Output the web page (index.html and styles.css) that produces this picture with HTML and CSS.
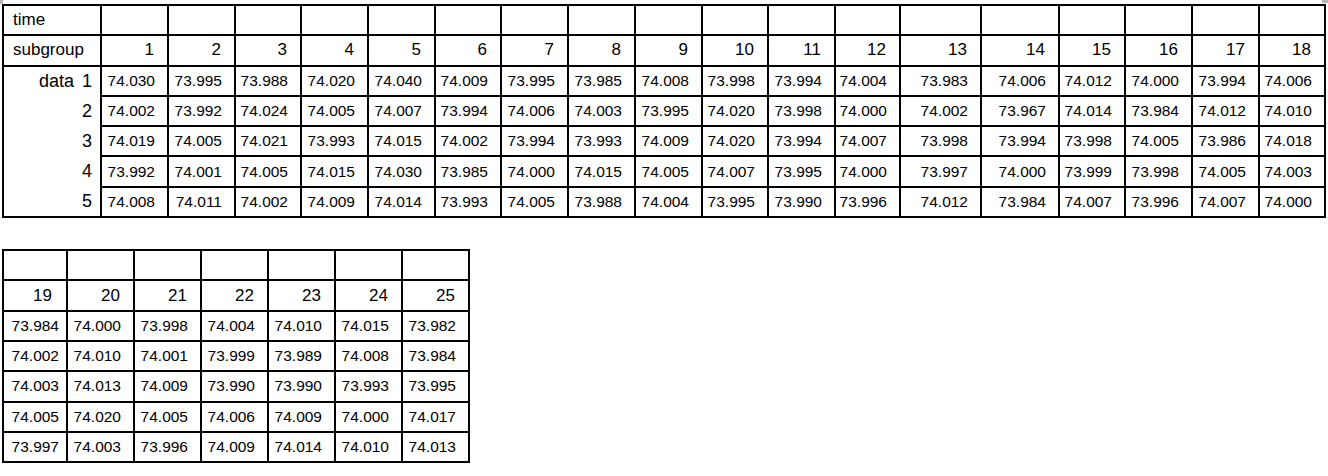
FILE: index.html
```html
<!DOCTYPE html>
<html>
<head>
<meta charset="utf-8">
<link rel="stylesheet" href="styles.css">
</head>
<body>
<span class="corner corner-l"></span>
<span class="corner corner-r"></span>
<div class="page">
<table class="grid t1">
<colgroup>
<col class="w98">
<col class="w67"><col class="w67"><col class="w66"><col class="w67"><col class="w67"><col class="w66">
<col class="w67"><col class="w67"><col class="w67"><col class="w66"><col class="w67"><col class="w65">
<col class="w81"><col class="w78"><col class="w66"><col class="w67"><col class="w67"><col class="w66">
</colgroup>
<tr class="hd"><td class="lbl left">time</td><td></td><td></td><td></td><td></td><td></td><td></td><td></td><td></td><td></td><td></td><td></td><td></td><td></td><td></td><td></td><td></td><td></td><td></td></tr>
<tr class="hd"><td class="lbl left">subgroup</td><td>1</td><td>2</td><td>3</td><td>4</td><td>5</td><td>6</td><td>7</td><td>8</td><td>9</td><td>10</td><td>11</td><td>12</td><td>13</td><td>14</td><td>15</td><td>16</td><td>17</td><td>18</td></tr>
<tr><td class="lbl first spaced">data 1</td><td>74.030</td><td>73.995</td><td>73.988</td><td>74.020</td><td>74.040</td><td>74.009</td><td>73.995</td><td>73.985</td><td>74.008</td><td>73.998</td><td>73.994</td><td>74.004</td><td>73.983</td><td>74.006</td><td>74.012</td><td>74.000</td><td>73.994</td><td>74.006</td></tr>
<tr><td class="lbl mid">2</td><td>74.002</td><td>73.992</td><td>74.024</td><td>74.005</td><td>74.007</td><td>73.994</td><td>74.006</td><td>74.003</td><td>73.995</td><td>74.020</td><td>73.998</td><td>74.000</td><td>74.002</td><td>73.967</td><td>74.014</td><td>73.984</td><td>74.012</td><td>74.010</td></tr>
<tr><td class="lbl mid">3</td><td>74.019</td><td>74.005</td><td>74.021</td><td>73.993</td><td>74.015</td><td>74.002</td><td>73.994</td><td>73.993</td><td>74.009</td><td>74.020</td><td>73.994</td><td>74.007</td><td>73.998</td><td>73.994</td><td>73.998</td><td>74.005</td><td>73.986</td><td>74.018</td></tr>
<tr><td class="lbl mid">4</td><td>73.992</td><td>74.001</td><td>74.005</td><td>74.015</td><td>74.030</td><td>73.985</td><td>74.000</td><td>74.015</td><td>74.005</td><td>74.007</td><td>73.995</td><td>74.000</td><td>73.997</td><td>74.000</td><td>73.999</td><td>73.998</td><td>74.005</td><td>74.003</td></tr>
<tr><td class="lbl last">5</td><td>74.008</td><td>74.011</td><td>74.002</td><td>74.009</td><td>74.014</td><td>73.993</td><td>74.005</td><td>73.988</td><td>74.004</td><td>73.995</td><td>73.990</td><td>73.996</td><td>74.012</td><td>73.984</td><td>74.007</td><td>73.996</td><td>74.007</td><td>74.000</td></tr>
</table>

<table class="grid t2">
<colgroup>
<col class="w64"><col class="w67"><col class="w67"><col class="w67"><col class="w67"><col class="w67"><col class="w67">
</colgroup>
<tr class="hd"><td></td><td></td><td></td><td></td><td></td><td></td><td></td></tr>
<tr class="hd"><td>19</td><td>20</td><td>21</td><td>22</td><td>23</td><td>24</td><td>25</td></tr>
<tr><td>73.984</td><td>74.000</td><td>73.998</td><td>74.004</td><td>74.010</td><td>74.015</td><td>73.982</td></tr>
<tr><td>74.002</td><td>74.010</td><td>74.001</td><td>73.999</td><td>73.989</td><td>74.008</td><td>73.984</td></tr>
<tr><td>74.003</td><td>74.013</td><td>74.009</td><td>73.990</td><td>73.990</td><td>73.993</td><td>73.995</td></tr>
<tr><td>74.005</td><td>74.020</td><td>74.005</td><td>74.006</td><td>74.009</td><td>74.000</td><td>74.017</td></tr>
<tr><td>73.997</td><td>74.003</td><td>73.996</td><td>74.009</td><td>74.014</td><td>74.010</td><td>74.013</td></tr>
</table>
</div>
</body>
</html>
```
FILE: styles.css
```css
html, body {
  margin: 0;
  padding: 0;
  background: #ffffff;
}
body {
  font-family: "Liberation Sans", Arial, Helvetica, sans-serif;
  color: #000000;
  position: relative;
  width: 1328px;
  height: 476px;
  overflow: hidden;
}
.corner {
  position: absolute;
  top: 0;
  background: #b4b4b4;
}
.corner-l {
  left: 0;
  width: 3px;
  height: 4px;
}
.corner-r {
  right: 0;
  width: 6px;
  height: 3px;
}
.page {
  padding: 4px 0 0 2px;
  display: flex;
  flex-direction: column;
  align-items: flex-start;
  gap: 31px;
}
.grid {
  border-collapse: collapse;
  table-layout: fixed;
  border: 2px solid #000;
}
.t1 { width: 1322px; }
.t2 { width: 466px; }
.grid td {
  border: 2px solid #000;
  height: 28.3px;
  padding: 0 12px 0 2px;
  text-align: right;
  font-size: 15.5px;
  white-space: nowrap;
  overflow: hidden;
  vertical-align: middle;
}
.grid tr.hd td {
  font-size: 17px;
  padding-right: 13px;
}
.grid td.lbl {
  font-size: 18px;
  padding: 0 8px 0 9px;
}
.grid td.spaced { word-spacing: 3px; }
.t2 tr:not(.hd) td:first-child { padding-right: 7px; }
.t2 tr.hd td:first-child { padding-right: 14px; }
.grid td.left { text-align: left; }
.grid td.first { border-bottom: none; }
.grid td.mid { border-top: none; border-bottom: none; }
.grid td.last { border-top: none; }
.w98 { width: 98px; }
.w81 { width: 81px; }
.w78 { width: 78px; }
.w67 { width: 67px; }
.w66 { width: 66px; }
.w65 { width: 65px; }
.w64 { width: 64px; }
```
